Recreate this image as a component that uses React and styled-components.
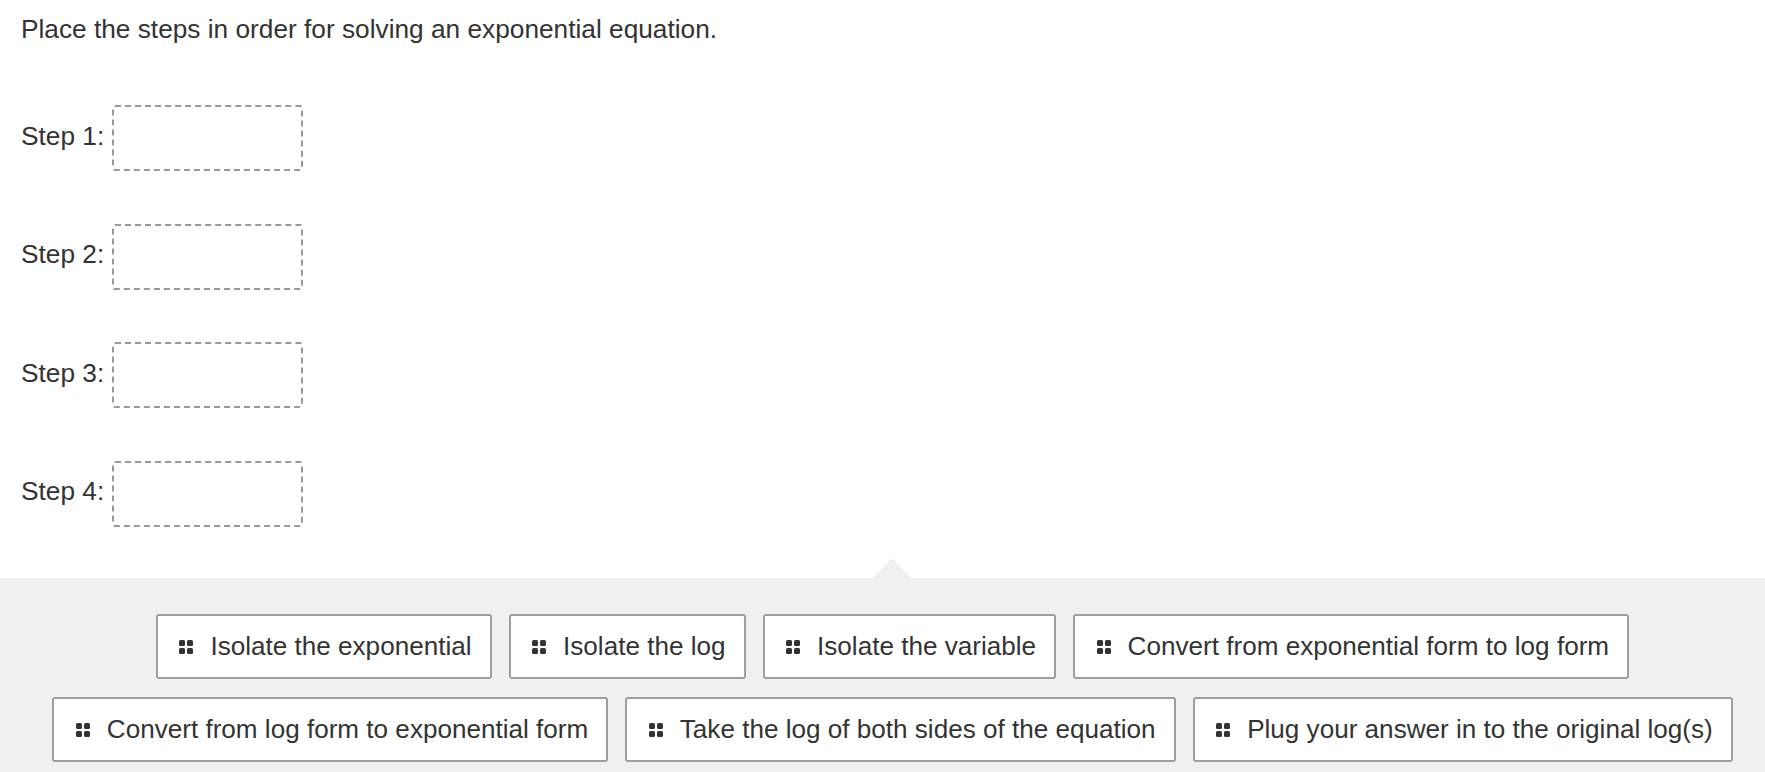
import React from 'react';
import styled, { createGlobalStyle } from 'styled-components';

const GlobalStyle = createGlobalStyle`
    html, body {
        margin: 0;
        padding: 0;
        background: #ffffff;
    }
    body {
        font-family: 'Liberation Sans', Arial, Helvetica, sans-serif;
        color: #333333;
    }
`

const Page = styled.div`
    width: 1765px;
    min-height: 772px;
    display: flex;
    flex-direction: column;
`

const Question = styled.div`
    padding: 14px 0 0 21px;
    display: flex;
    flex-direction: column;
`

const Prompt = styled.p`
    margin: 0;
    font-size: 26.25px;
    line-height: 30px;
    color: #333;
`

const Steps = styled.div`
    display: flex;
    flex-direction: column;
    gap: 52.5px;
    margin-top: 61px;
`

const StepRow = styled.div`
    display: flex;
    align-items: center;
    gap: 8px;
`

const StepLabel = styled.span`
    font-size: 26.25px;
    line-height: 30px;
    color: #333;
    padding-bottom: 5px;
`

const DropZone = styled.div`
    width: 187px;
    height: 62px;
    border: 2px dashed #999;
    border-radius: 3px;
    background: #fff;
`

const Bank = styled.div`
    position: relative;
    margin-top: 51.5px;
    flex: 1;
    background: #f0f0f0;
    padding: 36px 0 10px 20px;
    display: flex;
    flex-wrap: wrap;
    justify-content: center;
    gap: 18px 17px;
    &::before {
        content: '';
        position: absolute;
        top: -20px;
        left: 872px;
        border-left: 20px solid transparent;
        border-right: 20px solid transparent;
        border-bottom: 20px solid #f0f0f0;
    }
`

const Choice = styled.button`
    display: flex;
    align-items: center;
    gap: 17px;
    padding: 15px 18px 15px 21.5px;
    background: #fff;
    border: 2px solid #9e9e9e;
    border-radius: 3px;
    font-family: inherit;
    font-size: 26.1px;
    line-height: 31px;
    height: 65px;
    color: #333;
    cursor: move;
`

const Grip = () => (
    <svg width="14" height="14" viewBox="0 0 14 14">
        <rect x="0" y="0" width="6" height="6" rx="1.5" fill="#333" />
        <rect x="8" y="0" width="6" height="6" rx="1.5" fill="#333" />
        <rect x="0" y="8" width="6" height="6" rx="1.5" fill="#333" />
        <rect x="8" y="8" width="6" height="6" rx="1.5" fill="#333" />
    </svg>
)

const choices = [
    'Isolate the exponential',
    'Isolate the log',
    'Isolate the variable',
    'Convert from exponential form to log form',
    'Convert from log form to exponential form',
    'Take the log of both sides of the equation',
    'Plug your answer in to the original log(s)',
]

function App() {
    return (
        <Page>
            <GlobalStyle />
            <Question>
                <Prompt>Place the steps in order for solving an exponential equation.</Prompt>
                <Steps>
                    {[1, 2, 3, 4].map(n => (
                        <StepRow key={n}>
                            <StepLabel>Step {n}:</StepLabel>
                            <DropZone />
                        </StepRow>
                    ))}
                </Steps>
            </Question>
            <Bank>
                {choices.map(c => (
                    <Choice key={c}>
                        <Grip />
                        <span>{c}</span>
                    </Choice>
                ))}
            </Bank>
        </Page>
    );
}

export default App;
